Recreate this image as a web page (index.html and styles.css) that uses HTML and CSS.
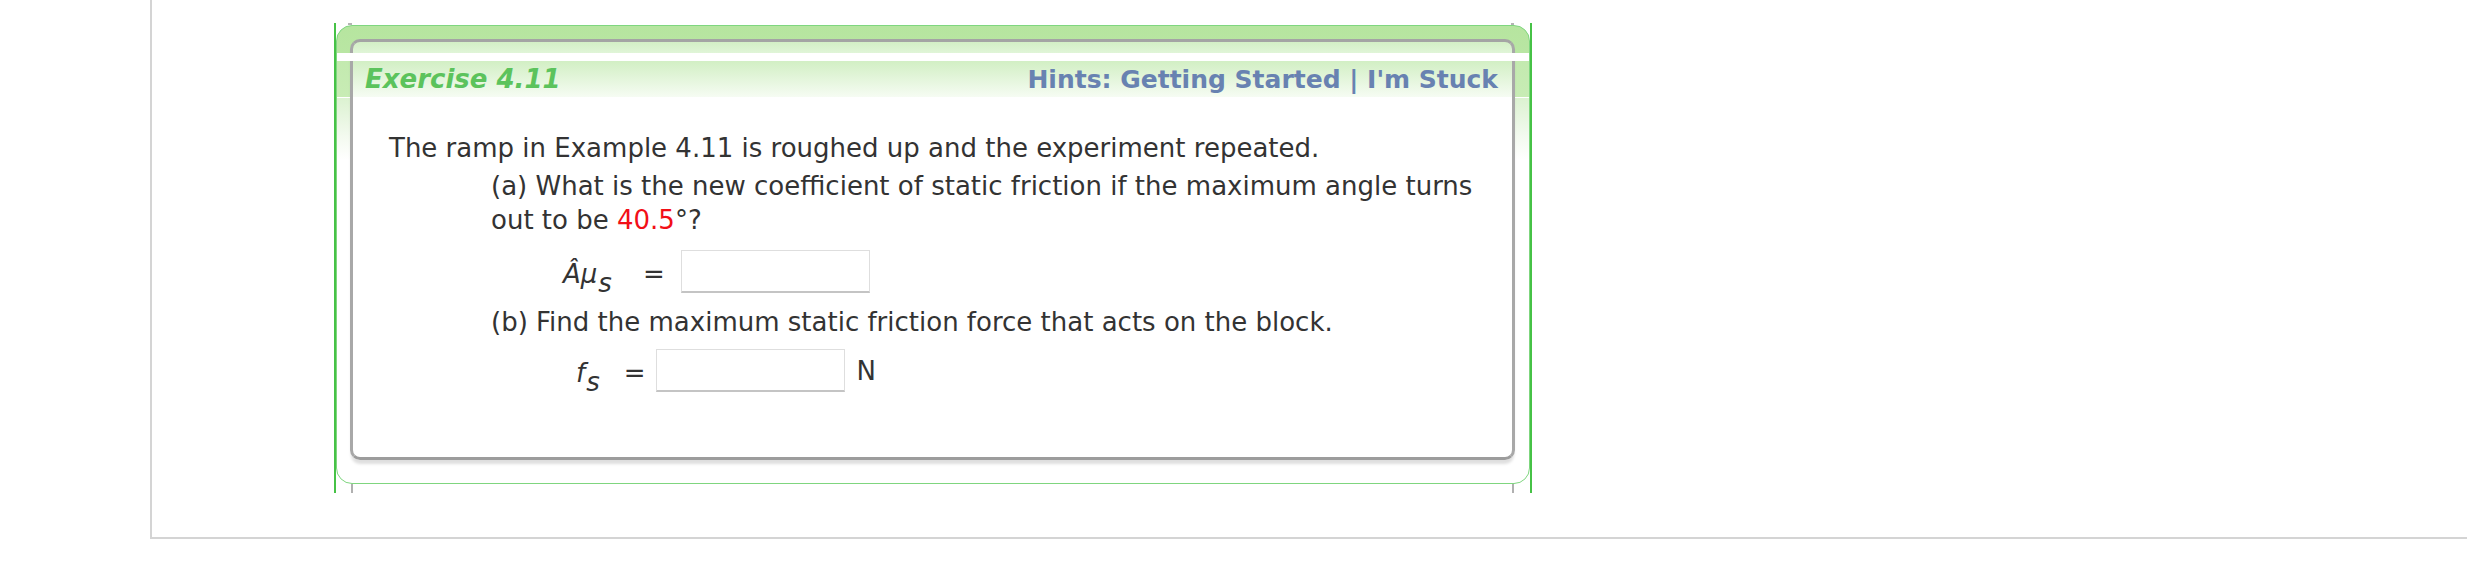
FILE: index.html
```html
<!DOCTYPE html>
<html>
<head>
<meta charset="utf-8">
<title>Exercise 4.11</title>
<link rel="stylesheet" href="styles.css">
</head>
<body>
<div class="sheet">
  <div class="ex">
    <div class="cap"></div>
    <div class="gbox">
      <div class="stripe"></div>
      <div class="ibox">
        <div class="head">
          <span class="title">Exercise 4.11</span>
          <span class="hints">Hints: Getting Started | I'm Stuck</span>
        </div>
        <div class="content">
          <p class="intro">The ramp in Example 4.11 is roughed up and the experiment repeated.</p>
          <p class="q"><span>(a) What is the new coefficient of static friction if the maximum angle turns</span> <span>out to be <span class="red">40.5</span>°?</span></p>
          <div class="ans a1"><span class="var">Âμ<sub>s</sub></span><span class="eq">=</span><input class="box" type="text"></div>
          <p class="q qb">(b) Find the maximum static friction force that acts on the block.</p>
          <div class="ans a2"><span class="var">f<sub>s</sub></span><span class="eq">=</span><input class="box" type="text"><span class="unit">N</span></div>
        </div>
      </div>
    </div>
    <div class="cap foot"></div>
  </div>
</div>
</body>
</html>
```

FILE: styles.css
```css
html, body {
  margin: 0;
  padding: 0;
  background: #fff;
}

body {
  font-family: "DejaVu Sans", Verdana, sans-serif;
  color: #333;
}

.sheet {
  box-sizing: border-box;
  margin-left: 150px;
  height: 539px;
  border-left: 2px solid #d4d4d4;
  border-bottom: 2px solid #d4d4d4;
  padding-top: 23px;
  padding-left: 182px;
}

.ex {
  box-sizing: border-box;
  width: 1198px;
  height: 470px;
  border-left: 2px solid #46c246;
  border-right: 2px solid #46c246;
  display: flex;
  flex-direction: column;
}

.cap {
  height: 2px;
  margin: 0 16px 0 12px;
  border-left: 4px solid #b4b4b4;
  border-right: 3px solid #b4b4b4;
}

.cap.foot {
  height: 9px;
  margin: 0 16px 0 15px;
  border-left: 2px solid #b0b0b0;
  border-right: 2px solid #b0b0b0;
}

.gbox {
  position: relative;
  box-sizing: border-box;
  height: 459px;
  border: 1px solid #7fd67f;
  border-radius: 16px;
  padding: 13px 14px 0 13px;
  background: linear-gradient(to bottom,
    #b6e59f 0px, #b9e6a3 27px,
    #c3eaaf 35px, #c8ecb5 71px,
    #ffffff 71px, #ffffff 72px,
    #dcf2d1 72px, #f3faef 110px, #ffffff 134px, #ffffff 100%);
}

.stripe {
  position: absolute;
  left: 0;
  right: 0;
  top: 27px;
  height: 8px;
  background: #fff;
  z-index: 2;
}

.ibox {
  box-sizing: border-box;
  height: 421px;
  border: 3px solid #a8a8a8;
  border-top-color: #a4a4a4;
  border-bottom-color: #9c9c9c;
  border-radius: 10px;
  padding-top: 19px;
  background: linear-gradient(to bottom, #d3efc6 0px, #e0f5d7 11px, #ffffff 11px);
  box-shadow: 0 5px 3px -1px rgba(0, 0, 0, 0.13);
}

.head {
  height: 36px;
  display: flex;
  justify-content: space-between;
  align-items: center;
  padding: 0 14px 0 12px;
  background: linear-gradient(to bottom, #d2efc4, #f6fcf3);
  font-weight: bold;
}

.title {
  color: #5cc35c;
  font-style: italic;
  font-size: 26px;
}

.hints {
  color: #6882b1;
  font-size: 25px;
}

.content {
  padding: 34px 0 0 36px;
  font-size: 26px;
  line-height: 34px;
}

.content p {
  margin: 0;
}

.intro {
  margin-bottom: 4px !important;
}

.q {
  margin-left: 102px !important;
  width: 1000px;
}

.qb {
  margin-top: 12px !important;
}

.ans {
  display: flex;
  align-items: center;
  height: 43px;
}

.a1 {
  margin-top: 13px;
  margin-left: 174px;
}

.a2 {
  margin-top: 10px;
  margin-left: 187px;
}

.var {
  font-style: italic;
  position: relative;
  top: 2px;
}

.var sub {
  font-size: 26px;
  vertical-align: -9px;
  line-height: 0;
  margin-left: 1px;
}

.a1 .eq {
  margin-left: 31px;
  margin-right: 16px;
}

.a2 .eq {
  margin-left: 24px;
  margin-right: 10px;
}

.eq {
  position: relative;
  top: 2px;
}

.box {
  box-sizing: border-box;
  width: 189px;
  height: 43px;
  margin: 0;
  padding: 0;
  border: 1px solid #dedede;
  border-bottom: 2px solid #c4c4c4;
  background: #fff;
  font-size: 26px;
}

.unit {
  margin-left: 12px;
}

.red {
  color: #f20f17;
}
```
